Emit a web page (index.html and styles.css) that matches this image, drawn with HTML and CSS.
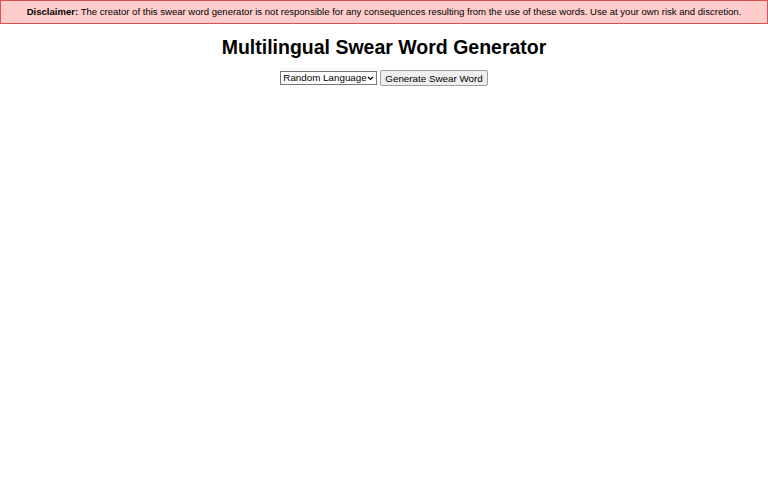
FILE: index.html
```html
<!DOCTYPE html>
<html>
<head>
<meta charset="utf-8">
<link rel="stylesheet" href="styles.css">
</head>
<body>
<div class="disclaimer"><strong>Disclaimer:</strong> The creator of this swear word generator is not responsible for any consequences resulting from the use of these words. Use at your own risk and discretion.</div>
<h1 class="title">Multilingual Swear Word Generator</h1>
<div class="controls">
<span class="lang-wrap">
<select class="lang"><option>Random Language</option></select>
<svg class="chev" width="7" height="5" viewBox="0 0 7 5"><path d="M1 1 L3.5 3.5 L6 1" fill="none" stroke="#000" stroke-width="1.2"/></svg>
</span>
<button class="gen">Generate Swear Word</button>
</div>
</body>
</html>
```
FILE: styles.css
```css
body {
  margin: 0;
  font-family: "Liberation Sans", Arial, sans-serif;
  text-align: center;
}
.disclaimer {
  background: #ffcccc;
  border: 1px solid #e05050;
  padding: 5px 4px;
  font-size: 9.55px;
  line-height: 12px;
}
.title {
  font-size: 19.5px;
  line-height: 22px;
  margin: 12px 0 12px;
}
.controls {
  display: flex;
  justify-content: center;
  align-items: center;
  gap: 3px;
}
.lang-wrap {
  position: relative;
  display: flex;
}
.lang, .gen {
  font-family: "Liberation Sans", Arial, sans-serif;
  font-size: 9.8px;
  color: #000;
  margin: 0;
  white-space: nowrap;
}
.lang {
  -webkit-appearance: none;
  appearance: none;
  width: 97px;
  height: 14px;
  padding: 0 0 0 2px;
  border: 1px solid #767676;
  border-radius: 0;
  background: #fff;
  line-height: 12px;
}
.chev {
  position: absolute;
  right: 3px;
  top: 5px;
  pointer-events: none;
}
.gen {
  height: 16px;
  padding: 0 4px;
  border: 1px solid #a0a0a0;
  border-radius: 2px;
  background: #efefef;
}
```
